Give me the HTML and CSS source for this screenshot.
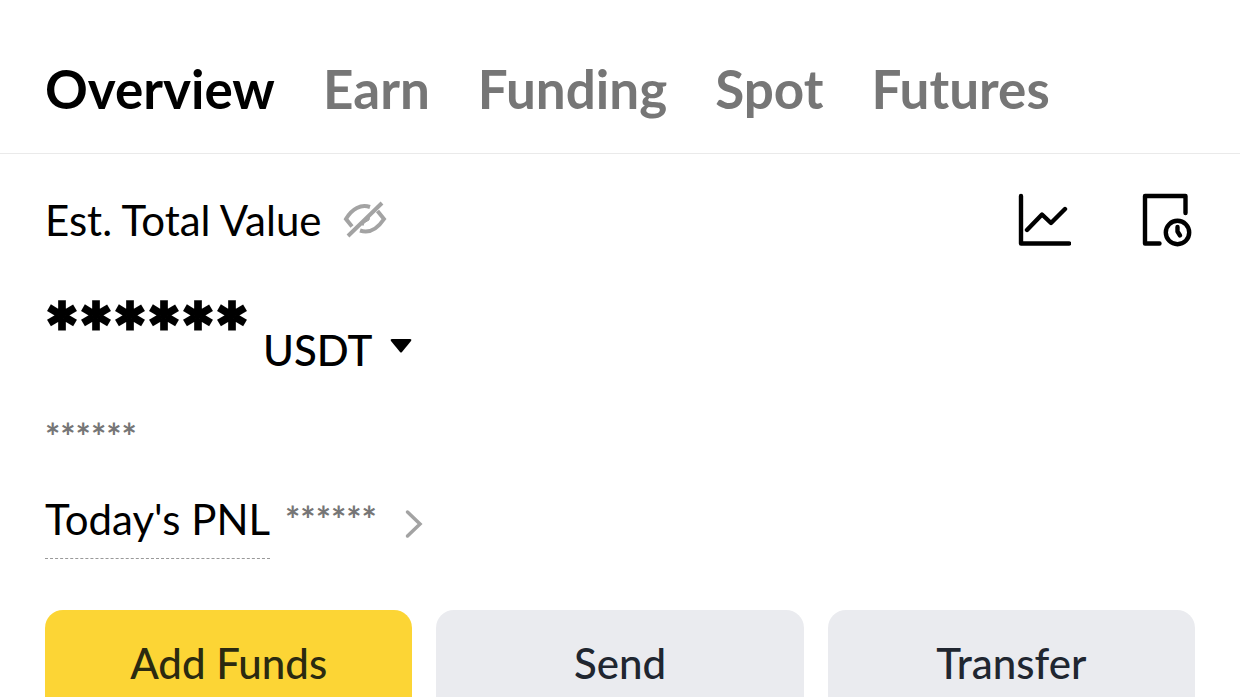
FILE: index.html
```html
<!DOCTYPE html>
<html lang="en">
<head>
<meta charset="utf-8">
<meta name="viewport" content="width=device-width">
<title>Overview</title>
<link rel="stylesheet" href="styles.css">
</head>
<body>
<nav class="tabs">
<a class="tab tab-active" href="#overview">Overview</a>
<a class="tab" href="#earn">Earn</a>
<a class="tab" href="#funding">Funding</a>
<a class="tab" href="#spot">Spot</a>
<a class="tab" href="#futures">Futures</a>
</nav>
<main class="content">
<header class="summary">
<div class="label-row">
<span>Est. Total Value</span>
<button class="icon-button" aria-label="Show balance">
<svg width="44" height="40" viewBox="0 0 44 40" fill="none" stroke="#a3a3a3" stroke-width="4"><path d="M27 7C18 4 9 8.500 3 19L9 26.500M34.500 11 41 19C34 29.500 26 33.500 17 30.500M5 36 39 3"/><path d="M18 23.500 27 15 26 20 21 23 20 25.500Z" fill="#a3a3a3" stroke-width="1"/></svg>
</button>
</div>
<div class="actions">
<button class="icon-button" aria-label="Analysis">
<svg width="54" height="54" viewBox="0 0 54 54" fill="none" stroke="#000" stroke-width="4.400" stroke-linecap="round" stroke-linejoin="round"><path d="M4 3v47.500H52M10 37 25 21.500l9 8.500L48 16"/></svg>
</button>
<button class="icon-button" aria-label="History">
<svg width="54" height="54" viewBox="0 0 54 54" fill="none" stroke="#000" stroke-width="4.400" stroke-linecap="round" stroke-linejoin="round"><path d="M18.500 50.500H4V3h40.500V20"/><circle cx="36.500" cy="39.500" r="11.700"/><path d="M36.500 34v4.500l2.500 4"/></svg>
</button>
</div>
</header>
<div class="balance">
<span class="stars-large">******</span>
<button class="currency">USDT <svg class="caret" width="22" height="14" viewBox="0 0 22 14"><path d="M2 0h18q2 0 1 2L12 13q-1 1-2 0L1 2Q0 0 2 0"/></svg></button>
</div>
<div class="stars">******</div>
<div class="pnl">
<span class="pnl-label">Today's PNL</span>
<span class="stars">******</span>
<button class="icon-button pnl-more" aria-label="PNL details"><svg width="20" height="30" viewBox="0 0 20 30" fill="none" stroke="#a3a3a3" stroke-width="3.500" stroke-linecap="round"><path d="M3.500 3 16 15 3.500 27"/></svg></button>
</div>
<div class="buttons">
<button class="button button-primary">Add Funds</button>
<button class="button">Send</button>
<button class="button">Transfer</button>
</div>
</main>
</body>
</html>
```
FILE: styles.css
```css
body { margin: 0; background: #fff; color: #000; font-family: Lato, sans-serif; font-size: 42px; line-height: 52px; }
.tabs { display: flex; gap: 48px; padding: 57px 45px 32px; border-bottom: 1px solid #eaeaea; font-size: 53px; line-height: 64px; font-weight: 700; }
.tab { color: #767676; text-decoration: none; }
.tab-active { color: #000; }
.content { padding: 39px 45px 0; }
.summary, .label-row, .actions, .balance, .pnl { display: flex; }
.summary { justify-content: space-between; align-items: center; }
.label-row { align-items: center; gap: 21px; }
.actions { gap: 70px; }
.icon-button, .currency { border: 0; padding: 0; background: none; color: inherit; font: inherit; }
.icon-button { display: flex; }
.balance { align-items: flex-end; gap: 14px; margin-top: 45px; height: 84px; }
.stars-large { font-size: 80px; line-height: 88px; font-weight: 700; -webkit-text-stroke: 3px #000; }
.currency { display: flex; align-items: center; gap: 18px; font-weight: 500; }
.caret { margin-bottom: 8px; }
.stars { color: #767676; font-size: 36px; line-height: 44px; font-weight: 700; }
.balance + .stars { margin-top: 38px; }
.pnl { align-items: flex-start; gap: 15px; margin-top: 35px; }
.pnl-label { padding-bottom: 13px; border-bottom: 1px dashed #999; }
.pnl .stars { padding-top: 4px; }
.pnl-more { margin: 16px 0 0 12px; }
.buttons { display: grid; grid-template-columns: repeat(3, 1fr); gap: 24px; margin-top: 51px; }
.button { border: 0; border-radius: 18px; padding: 27px 16px; background: #eaebef; color: #202630; font: inherit; font-weight: 500; }
.button-primary { background: #fcd535; color: #2b2a10; }
```
